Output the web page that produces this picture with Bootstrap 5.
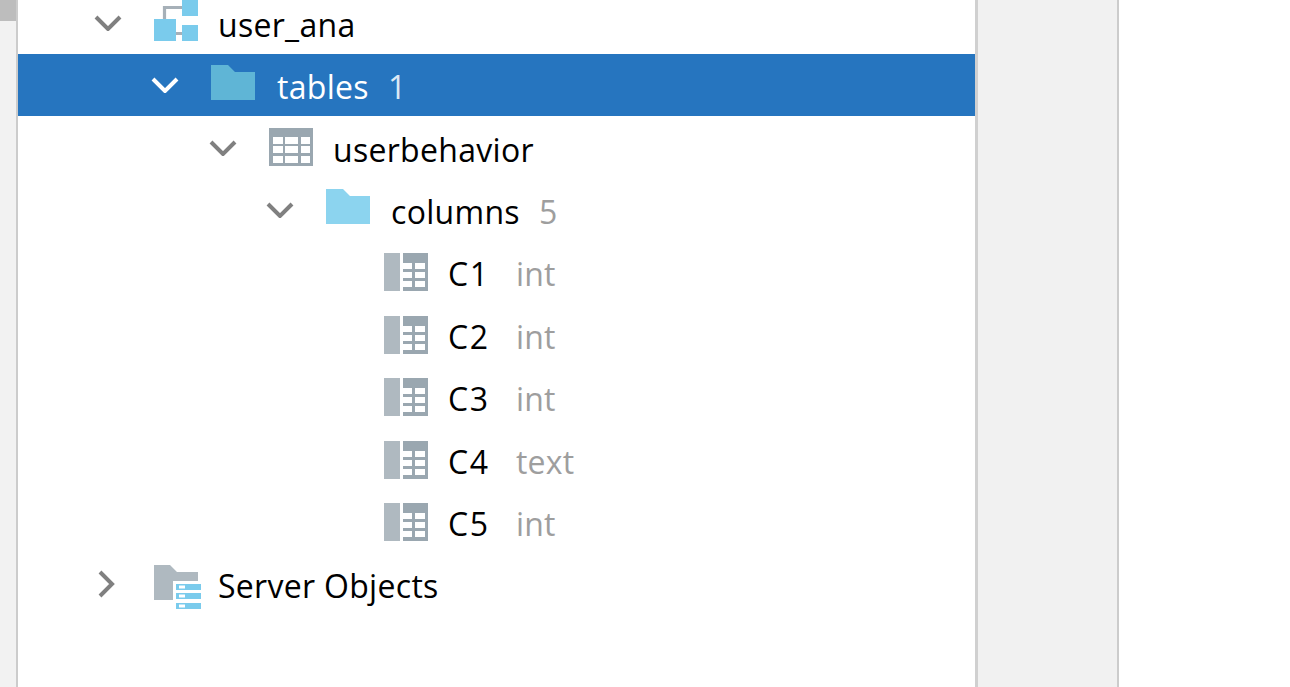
<!DOCTYPE html>
<html lang="en">
<head>
<meta charset="utf-8">
<title>Database tree</title>
<link href="https://cdn.jsdelivr.net/npm/bootstrap@5.3.0/dist/css/bootstrap.min.css" rel="stylesheet">
<style>
html,body{height:687px;overflow:hidden;background:#fff}
body{font-family:"Open Sans","Noto Sans",sans-serif;color:#000}
.shell{height:687px}
.gutter{width:18px;background:#f2f2f2;border-right:2px solid #ccc}
.thumb{height:21px;background:#bdbdbd}
.treepane{width:960px;border-right:3px solid #d0d0d0}
.sidepane{width:141px;background:#f1f1f1;border-right:2px solid #ccc}
.treelist{margin-top:-8.4px}
.noderow{height:62.4px;font-size:32px;letter-spacing:.3px}
.noderow>span:not(.chev,.glyph){padding-top:4px}
.noderow.picked{background:#2675bf;color:#fff}
.lv0{padding-left:76px}.lv1{padding-left:133px}.lv2{padding-left:191px}.lv3{padding-left:248px}.lv4{padding-left:366px}
.chev{width:60px;flex:none}
.glyph{width:64px;flex:none}
.lv1 .glyph{width:66px}
.lv3 .glyph{width:65px}
.glyph svg,.chev svg{display:block}
.lift1{margin-bottom:1px}
.lift2{margin-bottom:4px}
.lift3{margin-bottom:6px}
.drop3{margin-top:6px}
.hint{color:#9e9e9e;margin-left:19px;letter-spacing:.2px}
.picked .hint{color:#dbe8f5}
.colname{min-width:68px;letter-spacing:1.5px}
.lv4 .hint{margin-left:0}
</style>
</head>
<body>
<div class="shell d-flex">
  <div class="gutter flex-shrink-0"><div class="thumb"></div></div>
  <div class="treepane flex-shrink-0 overflow-hidden">
    <ul class="treelist list-unstyled mb-0">
      <li class="noderow lv0 d-flex align-items-center">
        <span class="chev"><svg width="28" height="16" viewBox="0 0 28 16"><path d="M2 2l12 12L26 2" fill="none" stroke="#808080" stroke-width="4"/></svg></span>
        <span class="glyph"><svg class="lift2" width="44" height="41" viewBox="0 0 44 41"><path d="M10.500 19V7.500H28M22 33.500H28" fill="none" stroke="#a6b0b8" stroke-width="3.200"/><rect y="19" width="22" height="22" fill="#7acbec"/><rect x="28" width="16" height="16" fill="#7acbec"/><rect x="28" y="25" width="16" height="16" fill="#7acbec"/></svg></span>
        <span>user_ana</span>
      </li>
      <li class="noderow picked lv1 d-flex align-items-center">
        <span class="chev"><svg width="28" height="16" viewBox="0 0 28 16"><path d="M2 2l12 12L26 2" fill="none" stroke="#fff" stroke-width="4"/></svg></span>
        <span class="glyph"><svg class="lift3" width="44" height="35" viewBox="0 0 44 35"><path d="M0 0H17L24 7H44V35H0Z" fill="#5fb5d6"/></svg></span>
        <span>tables</span><span class="hint">1</span>
      </li>
      <li class="noderow lv2 d-flex align-items-center">
        <span class="chev"><svg width="28" height="16" viewBox="0 0 28 16"><path d="M2 2l12 12L26 2" fill="none" stroke="#808080" stroke-width="4"/></svg></span>
        <span class="glyph"><svg class="lift1" width="44" height="38" viewBox="0 0 44 38"><rect width="44" height="38" fill="#9aa7b0"/><path d="M4 9h10v7H4zM16 9h13v7H16zM32 9h9v7h-9zM4 18h10v7H4zM16 18h13v7H16zM32 18h9v7h-9zM4 28h10v7H4zM16 28h13v7H16zM32 28h9v7h-9z" fill="#fff"/></svg></span>
        <span>userbehavior</span>
      </li>
      <li class="noderow lv3 d-flex align-items-center">
        <span class="chev"><svg width="28" height="16" viewBox="0 0 28 16"><path d="M2 2l12 12L26 2" fill="none" stroke="#808080" stroke-width="4"/></svg></span>
        <span class="glyph"><svg class="lift3" width="44" height="35" viewBox="0 0 44 35"><path d="M0 0H17L24 7H44V35H0Z" fill="#8cd4ef"/></svg></span>
        <span>columns</span><span class="hint">5</span>
      </li>
      <li class="noderow lv4 d-flex align-items-center">
        <span class="glyph"><svg width="44" height="38" viewBox="0 0 44 38"><use href="#colicon"/></svg></span>
        <span class="colname">C1</span><span class="hint">int</span>
      </li>
      <li class="noderow lv4 d-flex align-items-center">
        <span class="glyph"><svg width="44" height="38" viewBox="0 0 44 38"><use href="#colicon"/></svg></span>
        <span class="colname">C2</span><span class="hint">int</span>
      </li>
      <li class="noderow lv4 d-flex align-items-center">
        <span class="glyph"><svg width="44" height="38" viewBox="0 0 44 38"><use href="#colicon"/></svg></span>
        <span class="colname">C3</span><span class="hint">int</span>
      </li>
      <li class="noderow lv4 d-flex align-items-center">
        <span class="glyph"><svg width="44" height="38" viewBox="0 0 44 38"><use href="#colicon"/></svg></span>
        <span class="colname">C4</span><span class="hint">text</span>
      </li>
      <li class="noderow lv4 d-flex align-items-center">
        <span class="glyph"><svg width="44" height="38" viewBox="0 0 44 38"><use href="#colicon"/></svg></span>
        <span class="colname">C5</span><span class="hint">int</span>
      </li>
      <li class="noderow lv0 d-flex align-items-center">
        <span class="chev"><svg width="28" height="28" viewBox="0 0 28 28"><path d="M6 2l12 12L6 26" fill="none" stroke="#808080" stroke-width="4"/></svg></span>
        <span class="glyph"><svg class="drop3" width="48" height="45" viewBox="0 0 48 45"><path d="M0 0H16L23 7H44V16H19V35H0Z" fill="#afb9c0"/><path d="M22 19h25v6H22zM22 28h25v6H22zM22 38h25v6H22z" fill="#7acbec"/><path d="M25 20.500h6v3h-6zM25 29.500h6v3h-6zM25 39.500h6v3h-6z" fill="#fff"/></svg></span>
        <span>Server Objects</span>
      </li>
    </ul>
  </div>
  <div class="sidepane flex-shrink-0"></div>
</div>
<svg width="0" height="0" class="d-block"><defs><g id="colicon"><rect width="16" height="38" fill="#afb9c0"/><rect x="19" width="25" height="38" fill="#9aa7b0"/><path d="M19 10h9v6h-9zM31 10h10v6H31zM19 19h9v6h-9zM31 19h10v6H31zM19 28h9v6h-9zM31 28h10v6H31z" fill="#fff"/></g></defs></svg>
<script src="https://cdn.jsdelivr.net/npm/bootstrap@5.3.0/dist/js/bootstrap.bundle.min.js"></script>
</body>
</html>
